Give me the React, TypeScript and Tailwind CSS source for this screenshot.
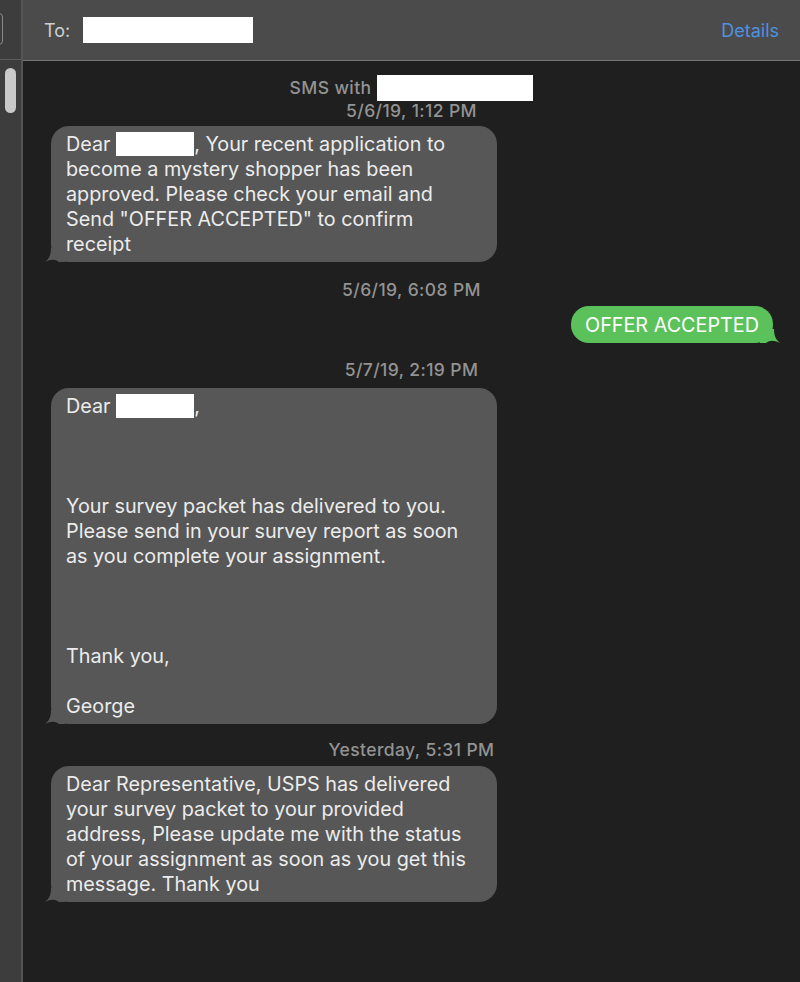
import React from "react";

const font = { fontFamily: 'Inter, "Liberation Sans", Arial, sans-serif' };

function TailLeft({ color }: { color: string }) {
  return (
    <svg className="absolute -left-[6px] bottom-0" width="20" height="14" viewBox="0 0 20 14">
      <path d="M20 0 L20 14 L14 14 C10 11 6 11 0 14 C4 11 6 7 6 0 Z" fill={color} />
    </svg>
  );
}

function TailRight({ color }: { color: string }) {
  return (
    <svg className="absolute -right-[7px] bottom-0" width="20" height="14" viewBox="0 0 20 14">
      <path d="M0 0 L0 14 L6 14 C10 11 14 11 20 14 C16 11 14 7 14 0 Z" fill={color} />
    </svg>
  );
}

function Stamp({ children }: { children: React.ReactNode }) {
  return (
    <div className="text-center text-[17.5px] leading-[20px] font-medium tracking-[0.4px] text-[#939393]">{children}</div>
  );
}

function Redact({ w, h = 24 }: { w: number; h?: number }) {
  return <span className="inline-block bg-white align-[-5px]" style={{ width: w, height: h }} />;
}

function Gray({ lines }: { lines: React.ReactNode[] }) {
  return (
    <div className="relative ml-[28px] w-[446px]">
      <div className="relative z-10 rounded-[18px] bg-[#575757] pl-[15px] pr-[10px] pt-[6px] pb-[5px] text-[19.8px] leading-[25px] text-[#ececec]">
        {lines.map((l, i) => (
          <div key={i} className="whitespace-nowrap h-[25px]">
            {l}
          </div>
        ))}
      </div>
      <TailLeft color="#575757" />
    </div>
  );
}

export default function App() {
  return (
    <div className="w-[800px] h-[982px] flex bg-[#1f1f1f] overflow-hidden" style={font}>
      {/* sidebar */}
      <div className="w-[23px] flex flex-col bg-[#3d3d3d] border-r-[2px] border-[#555555]">
        <div className="h-[60px] relative border-b border-[#5c5c5c]">
          <div className="absolute -left-[10px] top-[13px] w-[13px] h-[32px] rounded-[4px] border border-[#8a8a8a]" />
        </div>
        <div className="pt-[8px] pl-[5px]">
          <div className="w-[11px] h-[45px] rounded-full bg-[#c9c9c9]" />
        </div>
      </div>
      {/* main */}
      <div className="flex-1 flex flex-col">
        <div className="h-[61px] bg-[#4b4b4b] border-b border-[#767676] flex items-center pl-[21px] pr-[21px]">
          <span className="text-[18px] text-[#cfcfcf]">To:</span>
          <span className="ml-[13px] inline-block w-[170px] h-[26px] bg-white" />
          <span className="ml-auto text-[18px] text-[#4f92e0]">Details</span>
        </div>
        <div className="flex-1 flex flex-col pt-[17px]">
          <div className="flex justify-center items-center h-[20px] text-[17.5px] leading-[20px] font-medium tracking-[0.4px] text-[#939393]">
            <span>SMS with</span>
            <span className="ml-[6px] inline-block w-[156px] h-[26px] bg-white" />
          </div>
          <div className="mt-[3px]">
            <Stamp>5/6/19, 1:12 PM</Stamp>
          </div>
          <div className="mt-[5px]">
            <Gray
              lines={[
                <>Dear <Redact w={78} />, Your recent application to</>,
                "become a mystery shopper has been",
                "approved. Please check your email and",
                'Send "OFFER ACCEPTED" to confirm',
                "receipt",
              ]}
            />
          </div>
          <div className="mt-[18px]">
            <Stamp>5/6/19, 6:08 PM</Stamp>
          </div>
          <div className="mt-[6px] flex justify-end pr-[27px]">
            <div className="relative">
              <div className="relative z-10 rounded-[18px] bg-[#5bc15a] pl-[14px] pr-[14px] pt-[7px] pb-[5px] text-[19.8px] leading-[25px] text-white">
                OFFER ACCEPTED
              </div>
              <TailRight color="#5bc15a" />
            </div>
          </div>
          <div className="mt-[17px]">
            <Stamp>5/7/19, 2:19 PM</Stamp>
          </div>
          <div className="mt-[8px]">
            <Gray
              lines={[
                <>Dear <Redact w={78} />,</>,
                "",
                "",
                "",
                "Your survey packet has delivered to you.",
                "Please send in your survey report as soon",
                "as you complete your assignment.",
                "",
                "",
                "",
                "Thank you,",
                "",
                "George",
              ]}
            />
          </div>
          <div className="mt-[16px]">
            <Stamp>Yesterday, 5:31 PM</Stamp>
          </div>
          <div className="mt-[6px]">
            <Gray
              lines={[
                "Dear Representative, USPS has delivered",
                "your survey packet to your provided",
                "address, Please update me with the status",
                "of your assignment as soon as you get this",
                "message. Thank you",
              ]}
            />
          </div>
        </div>
      </div>
    </div>
  );
}
